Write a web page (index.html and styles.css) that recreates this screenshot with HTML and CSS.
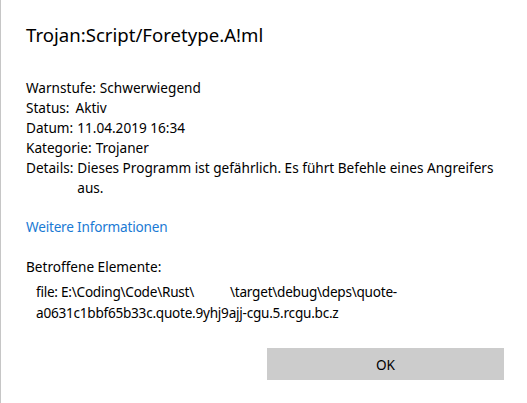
FILE: index.html
```html
<!DOCTYPE html>
<html lang="de">
<head>
<meta charset="utf-8">
<title>Trojan:Script/Foretype.A!ml</title>
<link rel="stylesheet" href="styles.css">
</head>
<body>
<div class="dialog">
  <div class="content">
    <h1 class="title">Trojan:Script/Foretype.A!ml</h1>
    <div class="info">
      <div class="row"><span class="label">Warnstufe:</span><span class="value">Schwerwiegend</span></div>
      <div class="row"><span class="label">Status:</span><span class="value status">Aktiv</span></div>
      <div class="row"><span class="label">Datum:</span><span class="value">11.04.2019 16:34</span></div>
      <div class="row"><span class="label">Kategorie:</span><span class="value">Trojaner</span></div>
      <div class="row"><span class="label">Details:</span><span class="value">Dieses Programm ist gefährlich. Es führt Befehle eines Angreifers aus.</span></div>
    </div>
    <a class="link" href="#">Weitere Informationen</a>
    <div class="affected-title">Betroffene Elemente:</div>
    <div class="file">file: E:\Coding\Code\Rust\<span class="blank"></span>\target\debug\deps\quote-<br>a0631c1bbf65b33c.quote.9yhj9ajj-cgu.5.rcgu.bc.z</div>
  </div>
  <div class="actions">
    <button class="ok">OK</button>
  </div>
</div>
</body>
</html>
```
FILE: styles.css
```css
html, body {
  margin: 0;
  padding: 0;
  background: #ffffff;
}
body {
  font-family: "Noto Sans", "Open Sans", sans-serif;
  color: #000000;
  font-size: 13.6px;
}
.dialog {
  width: 526px;
  height: 403px;
  border-left: 1px solid #c6c6c6;
  display: flex;
  flex-direction: column;
}
.content {
  padding: 21px 21px 0 25px;
  display: flex;
  flex-direction: column;
}
.title {
  margin: 0;
  font-size: 18.6px;
  font-weight: 400;
  line-height: 28px;
}
.info {
  margin-top: 29px;
  display: flex;
  flex-direction: column;
}
.row {
  display: flex;
  gap: 4px;
  line-height: 20px;
}
.label {
  flex: none;
}
.value {
  flex: 1;
}
.status {
  padding-left: 2px;
}
.link {
  margin-top: 19px;
  color: #1a7ad4;
  text-decoration: none;
  line-height: 20px;
  align-self: flex-start;
  letter-spacing: -0.2px;
}
.affected-title {
  margin-top: 20px;
  line-height: 20px;
}
.file {
  margin-top: 4px;
  padding-left: 10px;
  line-height: 21px;
  letter-spacing: -0.25px;
}
.blank {
  display: inline-block;
  width: 36px;
}
.actions {
  margin-top: auto;
  margin-bottom: 23px;
  display: flex;
  justify-content: flex-end;
  padding-right: 23px;
}
.ok {
  width: 237px;
  height: 32px;
  border: none;
  background: #cccccc;
  font-family: inherit;
  font-size: 13.6px;
  color: #000000;
  padding: 0;
}
```
